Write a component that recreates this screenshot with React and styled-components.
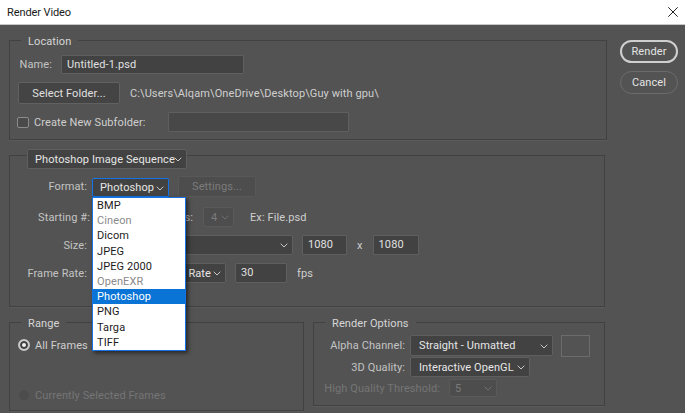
import React from 'react';
import styled, { createGlobalStyle } from 'styled-components';

const GlobalStyle = createGlobalStyle`
  html, body {
    margin: 0;
    background: #535353;
  }
  * {
    box-sizing: border-box;
  }
`;

const Dialog = styled.div`
  width: 685px;
  height: 413px;
  overflow: hidden;
  background: #535353;
  color: #d6d6d6;
  font: 11px Roboto, "Noto Sans", sans-serif;
  letter-spacing: 0.1px;
`;

const TitleBar = styled.div`
  height: 25px;
  padding: 0 7px;
  display: flex;
  align-items: center;
  justify-content: space-between;
  background: #fff;
  border-bottom: 1px solid #c8c8c8;
  color: #1a1a1a;
  font-size: 11px;
  letter-spacing: -0.1px;
`;

const Body = styled.div`
  display: flex;
  padding: 15px 8px 0 9px;
`;

const Main = styled.div`
  width: 598px;
  flex: none;
`;

const Side = styled.div`
  margin-left: 13px;
  display: flex;
  flex-direction: column;
  gap: 8px;
`;

const Panel = styled.section`
  position: relative;
  width: ${p => p.$w}px;
  height: ${p => p.$h}px;
  margin-top: ${p => p.$top || 0}px;
  padding: ${p => p.$pad || '0'};
  border: 1px solid #414141;
  box-shadow: 0 1px 0 #5a5a5a;
`;

const Legend = styled.div`
  position: absolute;
  top: -7px;
  left: 11px;
  padding: 0 7px;
  line-height: 16px;
  background: #535353;
`;

const LegendSelect = styled.div`
  position: absolute;
  top: -7px;
  left: 17px;
`;

const Row = styled.div`
  display: flex;
  align-items: ${p => (p.$bottom ? 'flex-end' : 'center')};
  height: ${p => p.$h || 20}px;
  margin-top: ${p => p.$top || 0}px;
  margin-left: ${p => p.$left || 0}px;
`;

const Label = styled.span`
  width: ${p => p.$w}px;
  flex: none;
  align-self: center;
  margin-right: ${p => p.$gap ?? 5}px;
  text-align: right;
  white-space: nowrap;
  color: ${p => (p.$off ? '#757575' : '#c4c4c4')};
`;

const Text = styled.span`
  margin-left: ${p => p.$left || 0}px;
  white-space: nowrap;
  color: ${p => (p.$off ? '#757575' : '#cfcfcf')};
`;

const Input = styled.div`
  width: ${p => p.$w}px;
  height: ${p => p.$h || 20}px;
  flex: none;
  margin-left: ${p => p.$left || 0}px;
  padding: 0 5px;
  line-height: ${p => (p.$h || 20) - 2}px;
  background: ${p => (p.$blank ? '#484848' : '#424242')};
  border: 1px solid #5f5f5f;
  border-radius: 1px;
  color: #e0e0e0;
`;

const Button = styled.div`
  width: ${p => p.$w}px;
  height: ${p => p.$h}px;
  flex: none;
  margin-left: ${p => p.$left || 0}px;
  display: flex;
  align-items: center;
  justify-content: center;
  background: ${p => (p.$off ? '#4d4d4d' : '#444')};
  border: 1px solid ${p => (p.$off ? '#585858' : '#616161')};
  border-radius: 2px;
  color: ${p => (p.$off ? '#7b7b7b' : '#e0e0e0')};
`;

const Select = styled.div`
  position: relative;
  width: ${p => p.$w}px;
  height: ${p => p.$h || 20}px;
  flex: none;
  margin-left: ${p => p.$left || 0}px;
  padding: 0 ${p => p.$right || 14}px 0 ${p => p.$pad || 8}px;
  display: flex;
  align-items: center;
  justify-content: ${p => (p.$end ? 'flex-end' : 'flex-start')};
  white-space: nowrap;
  overflow: hidden;
  background: ${p => (p.$off ? '#4d4d4d' : '#424242')};
  border: 1px solid ${p => (p.$active ? '#1473e6' : p.$off ? '#5a5a5a' : '#5f5f5f')};
  border-radius: 2px;
  color: ${p => (p.$off ? '#7b7b7b' : '#e6e6e6')};
`;

const ChevronMark = styled.svg`
  position: absolute;
  right: 4px;
  top: 50%;
  margin-top: -2px;
  width: 8px;
  height: 5px;
`;

const Chevron = ({ color = '#c8c8c8' }) => (
  <ChevronMark viewBox="0 0 8 5">
    <path d="M0.7 0.7 L4 4 L7.3 0.7" fill="none" stroke={color} strokeWidth="1" />
  </ChevronMark>
);

const DropdownField = ({ children, off, ...rest }) => (
  <Select $off={off} {...rest}>
    {children}
    <Chevron color={off ? '#6f6f6f' : '#c8c8c8'} />
  </Select>
);

const Checkbox = styled.span`
  width: 12px;
  height: 11px;
  flex: none;
  margin: 0 5px 0 7px;
  background: #4a4a4a;
  border: 1px solid #8c8c8c;
  border-radius: 2px;
`;

const Radio = styled.span`
  width: 12px;
  height: 12px;
  flex: none;
  margin: 0 5px 0 8px;
  border-radius: 50%;
  background: ${p => (p.$off ? '#4c4c4c' : '#f0f0f0')};
  border: ${p => (p.$off ? '1px solid #565656' : '2px solid #c8c8c8')};
  box-shadow: ${p => (p.$off ? 'none' : 'inset 0 0 0 2px #3f3f3f')};
`;

const PillButton = styled.div`
  width: 58px;
  height: 23px;
  display: flex;
  align-items: center;
  justify-content: center;
  border: ${p => (p.$primary ? '2px solid #cfcfcf' : '1px solid #6c6c6c')};
  border-radius: 12px;
  color: #e4e4e4;
`;

const Swatch = styled.div`
  width: 29px;
  height: 22px;
  margin-left: 8px;
  flex: none;
  background: #535353;
  border: 1px solid #6c6c6c;
`;

const BottomPanels = styled.div`
  display: flex;
  gap: 9px;
  margin-top: 15px;
`;

const Menu = styled.ul`
  position: absolute;
  left: 82px;
  top: 41px;
  z-index: 5;
  width: 94px;
  margin: 0;
  padding: 0;
  list-style: none;
  background: #fff;
  border: 1px solid #1473e6;
  box-shadow: 2px 2px 4px rgba(0, 0, 0, 0.55);
`;

const MenuItem = styled.li`
  height: 15.2px;
  padding-left: 4px;
  line-height: 15px;
  color: ${p => (p.$selected ? '#fff' : p.$off ? '#8a8a8a' : '#1c1c1c')};
  background: ${p => (p.$selected ? '#0a74d6' : 'transparent')};
`;

const CloseMark = styled.svg`
  width: 10px;
  height: 10px;
`;

const formats = [
  { name: 'BMP' },
  { name: 'Cineon', off: true },
  { name: 'Dicom' },
  { name: 'JPEG' },
  { name: 'JPEG 2000' },
  { name: 'OpenEXR', off: true },
  { name: 'Photoshop', selected: true },
  { name: 'PNG' },
  { name: 'Targa' },
  { name: 'TIFF' },
];

export default function App() {
  return (
    <Dialog>
      <GlobalStyle />
      <TitleBar>
        <span>Render Video</span>
        <CloseMark viewBox="0 0 10 10">
          <path d="M0.3 0.3 L9.7 9.7 M9.7 0.3 L0.3 9.7" stroke="#222" strokeWidth="1" />
        </CloseMark>
      </TitleBar>
      <Body>
        <Main>
          <Panel $w={598} $h={100} $pad="13px 0 0 0">
            <Legend>Location</Legend>
            <Row>
              <Label $w={42} $gap={9}>Name:</Label>
              <Input $w={183} $h={19}>Untitled-1.psd</Input>
            </Row>
            <Row $h={22} $top={8} $left={8}>
              <Button $w={102} $h={22}>Select Folder...</Button>
              <Text $left={10}>C:\Users\Alqam\OneDrive\Desktop\Guy with gpu\</Text>
            </Row>
            <Row $top={8}>
              <Checkbox />
              <Text>Create New Subfolder:</Text>
              <Input $w={181} $left={22} $blank />
            </Row>
          </Panel>

          <Panel $w={596} $h={152} $top={15} $pad="20px 0 0 0">
            <LegendSelect>
              <DropdownField $w={160} $pad={7} $right={12}>Photoshop Image Sequence</DropdownField>
            </LegendSelect>
            <Row $h={21} $bottom>
              <Label $w={77}>Format:</Label>
              <DropdownField $w={77} $h={19} $pad={7} $active>Photoshop</DropdownField>
              <Button $w={78} $h={21} $left={9} $off>Settings...</Button>
            </Row>
            <Menu>
              {formats.map(f => (
                <MenuItem key={f.name} $off={f.off} $selected={f.selected}>{f.name}</MenuItem>
              ))}
            </Menu>
            <Row $top={10}>
              <Label $w={80}>Starting #:</Label>
              <Input $w={50} />
              <Label $w={48} $gap={10}>s:</Label>
              <DropdownField $w={31} off $pad={7} $right={4}>4</DropdownField>
              <Text $left={16}>Ex: File.psd</Text>
            </Row>
            <Row $top={8}>
              <Label $w={77}>Size:</Label>
              <DropdownField $w={201} />
              <Input $w={45} $left={9}>1080</Input>
              <Text $left={10}>x</Text>
              <Input $w={46} $left={10}>1080</Input>
            </Row>
            <Row $top={8}>
              <Label $w={77}>Frame Rate:</Label>
              <DropdownField $w={134} $end $right={14}>Rate</DropdownField>
              <Input $w={52} $left={9}>30</Input>
              <Text $left={10}>fps</Text>
            </Row>
          </Panel>

          <BottomPanels>
            <Panel $w={295} $h={89} $pad="12px 0 0 0">
              <Legend>Range</Legend>
              <Row>
                <Radio />
                <Text>All Frames</Text>
              </Row>
              <Row $top={30}>
                <Radio $off />
                <Text $off>Currently Selected Frames</Text>
              </Row>
            </Panel>
            <Panel $w={292} $h={84} $pad="12px 0 0 0">
              <Legend>Render Options</Legend>
              <Row $h={21}>
                <Label $w={91}>Alpha Channel:</Label>
                <DropdownField $w={143} $h={21}>Straight - Unmatted</DropdownField>
                <Swatch />
              </Row>
              <Row $h={20} $top={1}>
                <Label $w={91}>3D Quality:</Label>
                <DropdownField $w={120}>Interactive OpenGL</DropdownField>
              </Row>
              <Row $h={18} $top={2}>
                <Label $w={126} $gap={9} $off>High Quality Threshold:</Label>
                <DropdownField $w={48} $h={18} off $pad={5} $right={4}>5</DropdownField>
              </Row>
            </Panel>
          </BottomPanels>
        </Main>
        <Side>
          <PillButton $primary>Render</PillButton>
          <PillButton>Cancel</PillButton>
        </Side>
      </Body>
    </Dialog>
  );
}
